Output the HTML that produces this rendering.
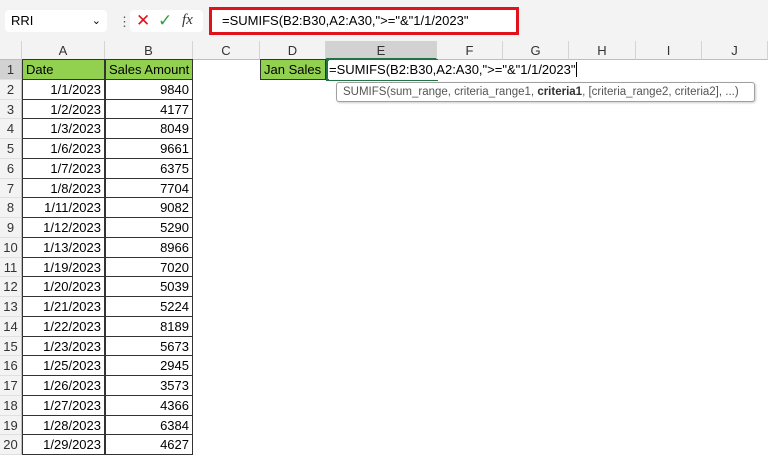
<html><head><style>
body{margin:0;width:768px;height:455px;overflow:hidden;background:#fff;font-family:"Liberation Sans",sans-serif;position:relative}
.tb{position:absolute;left:0;top:0;width:768px;height:41px;background:#f3f3f3}
.nb{position:absolute;left:5px;top:10px;width:102px;height:22px;background:#fff;border-radius:4px;font-size:13px;line-height:22px;box-sizing:border-box;padding-left:6px}
.fx{position:absolute;left:130px;top:10px;width:73px;height:22px;background:#fff;border-radius:4px}
.fb{position:absolute;left:209px;top:7px;width:310px;height:28px;border:3px solid #e0131d;box-sizing:border-box;background:#fff;font-size:13px;line-height:22px;padding-left:10px}
.ch{position:absolute;top:41px;height:19px;background:#f3f3f3;border-right:1px solid #d4d4d4;border-bottom:1px solid #bdbdbd;box-sizing:border-box;text-align:center;font-size:13px;line-height:19px;color:#333}
.rh{position:absolute;left:0;width:22px;background:#f3f3f3;border-right:1px solid #bdbdbd;border-bottom:1px solid #e0e0e0;box-sizing:border-box;font-size:13px;text-align:center;color:#333}
.c{position:absolute;box-sizing:border-box;font-size:13px;padding:0 3px;white-space:nowrap;border:1px solid #333;margin:-1px 0 0 -1px}
.g{background:#92d050}
.r{text-align:right}
</style></head><body>
<div class="tb"></div>
<div class="nb">RRI<span style="position:absolute;right:6px;top:0;font-size:11px">&#8964;</span></div>
<div style="position:absolute;left:118px;top:14px;font-size:13px;color:#555">&#8942;</div>
<div class="fx"><span style="position:absolute;left:6px;top:1px;color:#e0131d;font-size:17px">&#10005;</span><span style="position:absolute;left:28px;top:1px;color:#3a9b45;font-size:17px">&#10003;</span><span style="position:absolute;left:52px;top:2px;font-family:'Liberation Serif';font-style:italic;font-size:15px;color:#333">fx</span></div>
<div class="fb">=SUMIFS(B2:B30,A2:A30,"&gt;="&amp;"1/1/2023"</div>
<div class="ch" style="left:0;width:22px"></div>
<div class="ch" style="left:22px;width:83px">A</div>
<div class="ch" style="left:105px;width:88px">B</div>
<div class="ch" style="left:193px;width:67px">C</div>
<div class="ch" style="left:260px;width:66px">D</div>
<div class="ch" style="left:326px;width:111px;background:#d2d2d2;border-bottom:2px solid #217346">E</div>
<div class="ch" style="left:437px;width:66px">F</div>
<div class="ch" style="left:503px;width:66px">G</div>
<div class="ch" style="left:569px;width:67px">H</div>
<div class="ch" style="left:636px;width:66px">I</div>
<div class="ch" style="left:702px;width:66px">J</div>
<div id="rows"></div>
<script>
var d=[["Date","Sales Amount"],["1/1/2023",9840],["1/2/2023",4177],["1/3/2023",8049],["1/6/2023",9661],["1/7/2023",6375],["1/8/2023",7704],["1/11/2023",9082],["1/12/2023",5290],["1/13/2023",8966],["1/19/2023",7020],["1/20/2023",5039],["1/21/2023",5224],["1/22/2023",8189],["1/23/2023",5673],["1/25/2023",2945],["1/26/2023",3573],["1/27/2023",4366],["1/28/2023",6384],["1/29/2023",4627]];
var h="";for(var i=0;i<20;i++){var t=60+i*19.75;var st="top:"+t+"px;height:20.75px;line-height:19.75px;";
h+='<div class="rh" style="top:'+t+'px;height:19.75px;line-height:19.75px;'+(i==0?'background:#d2d2d2;':'')+'">'+(i+1)+'</div>';
if(i==0){h+='<div class="c g" style="'+st+'left:23px;width:83px">Date</div><div class="c g" style="'+st+'left:106px;width:88px">Sales Amount</div>';}
else{h+='<div class="c r" style="'+st+'left:23px;width:83px">'+d[i][0]+'</div><div class="c r" style="'+st+'left:106px;width:88px">'+d[i][1]+'</div>';}}
document.getElementById("rows").innerHTML=h;
</script>
<div class="c g" style="top:60px;left:261px;width:66px;height:20.75px;line-height:19.75px">Jan Sales</div>
<div style="position:absolute;left:326px;top:59px;width:112px;height:22px;border:2px solid #217346;box-sizing:border-box;background:#fff"></div>
<div style="position:absolute;left:329px;top:60px;font-size:13px;line-height:20px;white-space:nowrap;background:#fff">=SUMIFS(B2:B30,A2:A30,"&gt;="&amp;"1/1/2023"<span style="border-left:1px solid #000;margin-left:1px"></span></div>
<div style="position:absolute;left:336px;top:82px;width:419px;height:20px;border:1px solid #a0a0a0;border-radius:3px;background:#fff;font-size:11.5px;line-height:19px;padding-left:6px;box-sizing:border-box;color:#555;white-space:nowrap;box-shadow:1px 1px 2px #ccc">SUMIFS(sum_range, criteria_range1, <b style="color:#333">criteria1</b>, [criteria_range2, criteria2], ...)</div>
</body></html>
